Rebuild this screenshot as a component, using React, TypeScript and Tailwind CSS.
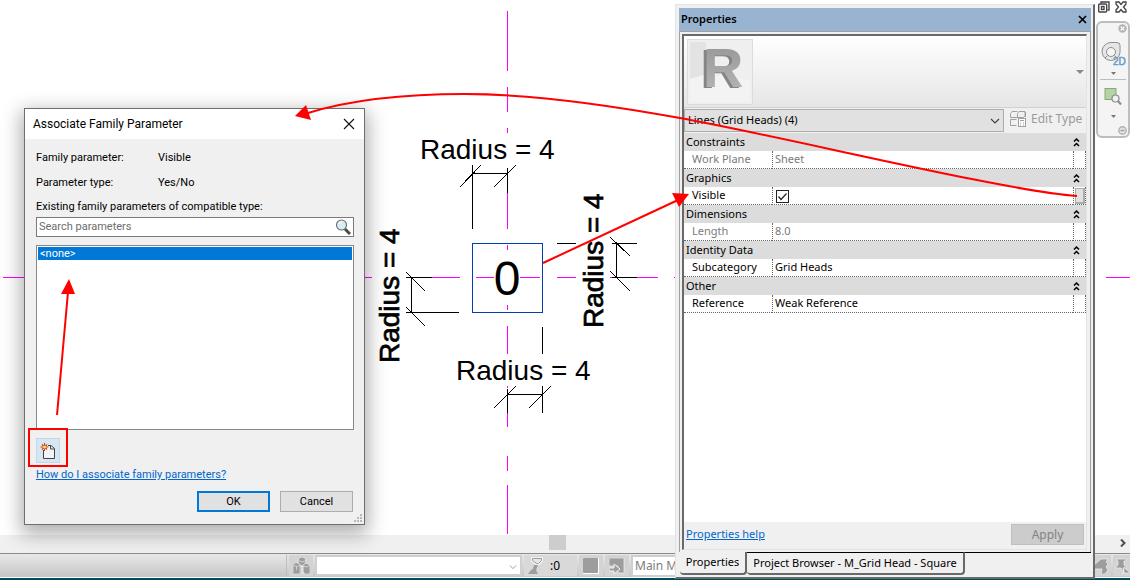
import { useState } from 'react'

type Property = {
  group: string
  name: string
  value: string
  readOnly?: boolean
  toggle?: boolean
}

const properties: Property[] = [
  { group: 'Constraints', name: 'Work Plane', value: 'Sheet', readOnly: true },
  { group: 'Graphics', name: 'Visible', value: '', toggle: true },
  { group: 'Dimensions', name: 'Length', value: '8.0', readOnly: true },
  { group: 'Identity Data', name: 'Subcategory', value: 'Grid Heads' },
  { group: 'Other', name: 'Reference', value: 'Weak Reference' },
]

function ChevronDown({ className }: { className?: string }) {
  return (
    <svg viewBox="0 0 10 6" className={className} fill="none" stroke="currentColor" strokeWidth="1.2">
      <path d="M1 1l4 4 4-4" />
    </svg>
  )
}

function DoubleUp() {
  return (
    <svg width="7" height="9" viewBox="0 0 7 9" fill="none" stroke="#000" strokeWidth="1.5">
      <path d="M1 3.500L3.500 1 6 3.500M1 8L3.500 5.500 6 8" />
    </svg>
  )
}

function Drawing() {
  return (
    <svg className="absolute inset-0 w-full h-full" fontFamily="'Liberation Sans', Arial, sans-serif">
      {/* Reference planes */}
      <g stroke="#ff00ff" shapeRendering="crispEdges">
        <path d="M507.5 11v60M507.5 87v25M507.5 128v5M507.5 193v36M507.5 245v5M507.5 305v5M507.5 326v28M507.5 386v2M507.5 413v14M507.5 456v15M507.5 485v49" />
        <path d="M3 277.5h27M360 277.5h12M432 277.5h28M476 277.5h18M520 277.5h20M557 277.5h19M610 277.5h48M674 277.5h1M1106 277.5h24" />
      </g>

      {/* Dimension lines */}
      <g stroke="#000" fill="none" shapeRendering="crispEdges">
        <path d="M472.5 165v64M472 173.5h36M507.5 168v25" />
        <path d="M406 277.5h26M406 312.5h53M411.5 277v36" />
        <path d="M557 243.5h19M612 243.5h25M612 277.5h25M616.5 243v35" />
        <path d="M542.5 327v27M507.5 389v24M542.5 386v27M507 394.5h36" />
        <path d="M460 187l21-22M494 187l22-22M494 408l22-22M529 408l22-22" />
        <path d="M406 272l19 19M406 307l19 19M610 237l20 19M610 271l20 20" />
      </g>

      <rect x="472.5" y="243.5" width="70" height="69" fill="none" stroke="#0040b0" shapeRendering="crispEdges" />

      <g fontSize="28">
        <text x="420" y="159">Radius = 4</text>
        <text x="456" y="380">Radius = 4</text>
        <g stroke="#000" strokeWidth="0.7">
          <text transform="translate(399 363) rotate(-90)">Radius = 4</text>
          <text transform="translate(603 328) rotate(-90)">Radius = 4</text>
        </g>
      </g>
      <text x="507" y="295" fontSize="48" textAnchor="middle">0</text>
    </svg>
  )
}

function Annotations() {
  return (
    <svg className="absolute inset-0 w-full h-full pointer-events-none" fill="none" stroke="#ff0000" strokeWidth="2">
      <path d="M1077 196C1000 190 790 138 680 118C620 107 540 94 465 94C400 94 350 100 308 113" />
      <path d="M543 263L678 200" />
      <path d="M57 415L68 292" />
      <rect x="29" y="429" width="38" height="37" />
      <g fill="#ff0000" stroke="none">
        <path d="M295 116l11-11 5 15z" />
        <path d="M689 194l-17-1 7 14z" />
        <path d="M69 279l-8 15h14z" />
      </g>
    </svg>
  )
}

function NavigationBar() {
  return (
    <aside className="absolute top-0 right-0 w-[34px]">
      <div className="flex justify-between pl-[2px] pr-[3px] pt-[1px]">
        <button aria-label="Restore">
          <svg width="12" height="12" viewBox="0 0 12 12" fill="none" stroke="#444" strokeWidth="1.4">
            <path d="M3 2.5V1h8v8H9.500" />
            <rect x="0.700" y="3" width="8" height="8" rx="1" />
            <rect x="3.500" y="5.500" width="2.500" height="3" />
          </svg>
        </button>
        <button aria-label="Close view">
          <svg width="12" height="12" viewBox="0 0 12 12" fill="#fff" stroke="#444" strokeWidth="1.3">
            <path d="M1 1h3l2 2.500L8 1h3v2L8.500 6 11 9v2H8L6 8.500 4 11H1V9l2.500-3L1 3z" />
          </svg>
        </button>
      </div>
      <div className="mt-2 h-[117px] rounded-md border-2 border-[#bdbdbd] bg-[#f4f4f4] flex flex-col items-center">
        <button className="self-end mr-[1px] mt-[1px]" aria-label="Close navigation bar">
          <svg width="9" height="9" viewBox="0 0 9 9">
            <circle cx="4.500" cy="4.500" r="4.200" fill="#b4b4b4" />
            <path d="M2.700 2.700l3.600 3.600M6.300 2.700L2.700 6.300" stroke="#fff" strokeWidth="1.200" />
          </svg>
        </button>
        <button className="mt-2" aria-label="Steering wheel 2D">
          <svg width="26" height="26" viewBox="0 0 26 26" fill="none" stroke="#8e8e8e">
            <path d="M11 1.500h6q3 0 3 3v7a9 9 0 1 1-9-10z" fill="#e6e6e8" />
            <circle cx="11" cy="11" r="4.500" fill="#f4f4f4" />
            <path d="M7.500 14.500l-2.500 2.500M14.500 14.500l2 2" />
            <text x="13" y="24" fontSize="10" fontFamily="'Liberation Sans', Arial, sans-serif" fill="#6c9bc8" stroke="#6c9bc8" strokeWidth="0.500">2D</text>
          </svg>
        </button>
        <svg className="mt-[5px]" width="5" height="3" viewBox="0 0 5 3"><path d="M0 0h5L2.500 3z" fill="#777" /></svg>
        <div className="mt-[4px] w-[26px] border-t border-[#bdbdbd]" />
        <button className="mt-2" aria-label="Zoom region">
          <svg width="18" height="18" viewBox="0 0 18 18">
            <rect x="1" y="0.500" width="11" height="11" fill="#b5d3a4" stroke="#83ad76" />
            <circle cx="11.500" cy="10.500" r="3.500" fill="#eef2f4" stroke="#8a8a8a" strokeWidth="1.200" />
            <path d="M14 13l3 3.500" stroke="#8a8a8a" strokeWidth="2" />
          </svg>
        </button>
        <svg className="mt-[9px]" width="5" height="3" viewBox="0 0 5 3"><path d="M0 0h5L2.500 3z" fill="#777" /></svg>
        <button className="self-end mr-[1px] mt-auto mb-[1px]" aria-label="Options">
          <svg width="9" height="9" viewBox="0 0 9 9">
            <circle cx="4.500" cy="4.500" r="3.700" fill="#e4e4e4" stroke="#b0b0b0" strokeWidth="1.400" />
            <path d="M2.500 4.500h4" stroke="#a0a0a0" strokeWidth="1.500" />
          </svg>
        </button>
      </div>
    </aside>
  )
}

function StatusBar() {
  return (
    <footer className="h-[24px] shrink-0 flex items-stretch gap-[2px] pl-[286px] py-[1px] border-t border-[#8a8a8a] bg-linear-to-b from-[#e8e8e8] to-[#c6c6c6] overflow-hidden">
      <div className="w-[1px] bg-[#bdbdbd]" />
      <button className="w-[24px] shrink-0 bg-[#d3d3d3] flex items-center justify-center" aria-label="Worksets">
        <svg width="17" height="17" viewBox="0 0 17 17" fill="#9d9d9d" stroke="#f2f2f2" strokeWidth="0.600">
          <path d="M5 4l1-3 3-1 3 1 1 3-2 5H6z" />
          <path d="M0 7l3-1.500L7 7l1 2v8H0z" />
          <path d="M10 8l3-2 4 2v9h-5l-2-2z" />
          <path d="M7 9h3v8H7zM0 8l3.500 1.500L8 8M3.500 9.500V13M5 3.500L9 5l4-1.500M10 9l3 1 4-1.500" fill="none" />
        </svg>
      </button>
      <div className="relative w-[207px] shrink-0 border-2 border-[#cfcfcf] bg-white">
        <select className="block w-full h-full appearance-none" aria-label="Active workset">
          <option></option>
        </select>
        <ChevronDown className="absolute right-[3px] top-[7px] w-[8px] h-[6px] text-[#999]" />
      </div>
      <div className="w-[53px] shrink-0 bg-[#d9d9d9] flex items-center gap-[5px] pl-[4px]">
        <svg width="17" height="17" viewBox="0 0 17 17" fill="#9d9d9d">
          <path d="M4 1h10v3l-3 3H8L4 4z" fill="#dedede" stroke="#f2f2f2" strokeWidth="2" />
          <path d="M4.500 1.500h9v2l-3 3h-2l-4-3z" fill="#e6e6e6" stroke="#9d9d9d" />
          <path d="M6 8h4l-2 5 2 4H0l3-4 2-1z" />
        </svg>
        <span className="text-[12px]">:0</span>
      </div>
      <button className="w-[24px] shrink-0 bg-[#d3d3d3] flex items-center justify-center" aria-label="Editable only">
        <svg width="16" height="16" viewBox="0 0 16 16">
          <rect width="16" height="16" rx="1" fill="#fff" />
          <rect width="15" height="15" rx="1" fill="#9d9d9d" />
        </svg>
      </button>
      <button className="w-[24px] shrink-0 bg-[#d3d3d3] flex items-center justify-center" aria-label="Design options">
        <svg width="16" height="16" viewBox="0 0 16 16">
          <path d="M0 0h15v15h-6V8H0z" fill="#9d9d9d" stroke="#f2f2f2" strokeWidth="0.700" />
          <path d="M0 10h5V6l6 5-6 5v-3H0z" fill="#9d9d9d" stroke="#f2f2f2" />
        </svg>
      </button>
      <div className="w-[200px] h-[22px] shrink-0 border-2 border-[#cfcfcf] bg-white">
        <select className="block w-full h-[17px] appearance-none px-[2px] text-[12px] leading-[17px] text-[#7d7d7d]" aria-label="Design option">
          <option>Main Model</option>
        </select>
      </div>
      <button className="ml-auto w-[20px] shrink-0 bg-[#d3d3d3] flex items-center justify-center" aria-label="Select links">
        <svg width="16" height="16" viewBox="0 0 16 16" fill="#9d9d9d" stroke="#f2f2f2" strokeWidth="0.700">
          <path d="M1 7l7-6h7l-2 3 2 2-2 3 2 3-3 4H8l1-5H1z" />
        </svg>
      </button>
      <button className="w-[17px] shrink-0 bg-[#d3d3d3] flex items-center justify-center" aria-label="Select pinned">
        <svg width="16" height="16" viewBox="0 0 16 16" fill="#9d9d9d" stroke="#f2f2f2" strokeWidth="0.700">
          <path d="M3 1h9v2h-2v4l3 3H9v6l-2-6H1l3-3V3H3z" />
          <path d="M10 9l6 6h-6z" />
        </svg>
      </button>
    </footer>
  )
}

function AssociateDialog() {
  return (
    <section
      role="dialog"
      aria-label="Associate Family Parameter"
      className="absolute left-[24px] top-[108px] w-[341px] border border-[#6e6e6e] bg-[#f0f0f0] shadow-[0_6px_18px_3px_rgba(0,0,0,0.32)] font-[Roboto,'Noto_Sans',sans-serif] text-[11px] leading-[16px]"
    >
      <header className="h-[30px] bg-white pl-2 pr-[9px] flex items-center justify-between">
        <h2 className="text-[12px]">Associate Family Parameter</h2>
        <button aria-label="Close">
          <svg width="12" height="12" viewBox="0 0 12 12" stroke="#111" strokeWidth="1.100">
            <path d="M1 1l10 10M11 1L1 11" />
          </svg>
        </button>
      </header>

      <div className="pl-[11px] pr-[10px] pt-[11px]">
        <dl className="grid grid-cols-[122px_1fr] gap-y-[9px]">
          <dt>Family parameter:</dt>
          <dd>Visible</dd>
          <dt>Parameter type:</dt>
          <dd>Yes/No</dd>
        </dl>
        <label htmlFor="search" className="block mt-2">Existing family parameters of compatible type:</label>
        <div className="mt-[2px] h-[20px] border border-[#7a7a7a] bg-white flex items-center">
          <input
            id="search"
            placeholder="Search parameters"
            className="flex-1 px-[2px] outline-none placeholder:text-[#6d6d6d]"
          />
          <svg className="mr-[2px]" width="16" height="16" viewBox="0 0 16 16">
            <path d="M10 10l5 5" stroke="#4a4a4a" strokeWidth="3" />
            <circle cx="6.500" cy="6" r="5" fill="#d9edf5" stroke="#6b6b6b" strokeWidth="1.100" />
            <path d="M4 5q1-2 3-2" stroke="#fff" fill="none" />
          </svg>
        </div>
        <ul className="mt-2 h-[185px] border border-[#828790] bg-white p-[1px]">
          <li className="h-[13px] leading-[14px] bg-[#0078d7] text-white pl-[2px]">&lt;none&gt;</li>
        </ul>
        <button className="mt-2 w-[24px] h-[25px] border border-[#bcd9ee] bg-[#d8e6f1] flex items-center justify-center" aria-label="New parameter">
          <svg width="16" height="18" viewBox="0 0 16 18">
            <path d="M3.500 8v8.500h11V6.500L11 3.500H8" fill="#f4f4f6" />
            <path d="M3.500 8v8.500h11V6.500L11 3.500H8M10.500 3.500v3.500h4" fill="none" stroke="#444" />
            <path d="M4.500 1v8M0.500 5h8M2 2.500l5 5M7 2.500l-5 5" stroke="#c8401c" strokeWidth="1.100" />
            <circle cx="4.500" cy="5" r="1.500" fill="#ffe04a" />
          </svg>
        </button>
        <a href="#help" className="block w-fit mt-[4px] text-[#0066cc] underline">How do I associate family parameters?</a>
        <div className="mt-2 flex justify-end gap-[10px] pr-[1px]">
          <button className="w-[73px] h-[21px] border-2 border-[#0078d7] bg-[#e1e1e1]">OK</button>
          <button className="w-[73px] h-[21px] border border-[#adadad] bg-[#e1e1e1]">Cancel</button>
        </div>
      </div>
      <div className="h-[12px] flex justify-end items-end pr-[2px] pb-[2px]">
        <svg width="8" height="8" viewBox="0 0 8 8" fill="#b8b8b8">
          <path d="M6 0h2v2H6zM3 3h2v2H3zM6 3h2v2H6zM0 6h2v2H0zM3 6h2v2H3zM6 6h2v2H6z" />
        </svg>
      </div>
    </section>
  )
}

function TypePreview() {
  return (
    <div className="h-[72px] shrink-0 border-b border-[#d0d0d0] bg-linear-to-b from-white to-[#e6e6e6] flex items-center justify-between pl-[3px] pr-[2px]">
      <svg className="overflow-visible" width="66" height="66" viewBox="0 0 66 66" role="img" aria-label="Family type preview">
        <defs>
          <linearGradient id="face" x1="0" y1="0" x2="0" y2="1">
            <stop offset="0" stopColor="#949494" />
            <stop offset="1" stopColor="#b8b8b8" />
          </linearGradient>
        </defs>
        <rect x="0.500" y="0.500" width="65" height="65" fill="#efefef" stroke="#dcdcdc" />
        <path d="M3 3h16v32L3 40z" fill="#e3e3e3" />
        <path d="M3 40l20-5 40 6v22H3z" fill="#f3f3f3" />
        <text
          x="16"
          y="48"
          fontFamily="'Liberation Sans', Arial, sans-serif"
          fontWeight="700"
          fontSize="56"
          fill="url(#face)"
          className="drop-shadow-[-3px_1px_0_#858585]"
        >
          R
        </text>
      </svg>
      <svg width="8" height="4" viewBox="0 0 8 4"><path d="M0 0h8L4 4z" fill="#8c8c8c" /></svg>
    </div>
  )
}

function PropertiesPalette() {
  const [visible, setVisible] = useState(true)

  return (
    <section className="absolute right-[35px] top-[4px] bottom-[1px] w-[420px] flex flex-col bg-[#f0f0f0] border-l border-t border-l-[#e3e3e3] border-t-[#e3e3e3] border-r-2 border-b-2 border-r-[#696969] border-b-[#696969] pl-[3px] pr-[2px] pt-[3px] text-[12px]">
      <header className="h-[23px] shrink-0 bg-[#99b4d1] pl-[2px] pr-[4px] flex items-center justify-between">
        <h2 className="text-[11px] font-semibold">Properties</h2>
        <button aria-label="Close palette">
          <svg width="9" height="9" viewBox="0 0 9 9" stroke="#000" strokeWidth="1.700">
            <path d="M1 1l7 7M8 1L1 8" />
          </svg>
        </button>
      </header>

      <div className="flex-1 min-h-0 border-t border-l border-r border-[#a0a0a0] p-[2px] pr-[3px]">
        <div className="h-full flex flex-col border-t-2 border-l-2 border-[#696969] border-r border-r-[#e3e3e3] border-b border-b-[#e3e3e3] text-[11px]">
          <TypePreview />

          <div className="h-[25px] shrink-0 flex items-start pt-[1px] gap-[6px]">
            <div className="relative w-[320px] h-[23px]">
              <select className="block w-full h-full appearance-none border border-[#adadad] bg-[#e1e1e1] pl-[3px]" aria-label="Selection filter">
                <option>Lines (Grid Heads) (4)</option>
              </select>
              <ChevronDown className="absolute right-[4px] top-[9px] w-[10px] h-[6px] text-[#444]" />
            </div>
            <button className="h-[20px] flex items-center gap-[5px] text-[12px] text-[#9a9a9a]">
              <svg width="16" height="16" viewBox="0 0 16 16" fill="none" stroke="#a0a0a0">
                <path d="M7.500 6.500v-4l1.500-2h6v4l-1.500 2zM0.500 6.500v-4l1.500-2h5.500M0.500 6.500h7M0.500 8.500v6h6M0.500 8.500h6M15.500 1v5" />
                <rect x="8.500" y="7.500" width="7" height="8" fill="#fff" />
                <path d="M10 9.500h4M10 12h1M13 12h1M10 14h1M13 14h1" />
              </svg>
              Edit Type
            </button>
          </div>

          <div className="flex-1 bg-white">
            <table className="w-full table-fixed border-separate border-spacing-0">
              <colgroup>
                <col className="w-[88px]" />
                <col />
                <col className="w-[13px]" />
              </colgroup>
              {properties.map((p) => (
                <tbody key={p.group}>
                  <tr className="h-[18px] bg-[#dcdcdc]">
                    <th colSpan={2} className="p-0 pl-[2px] text-left font-normal leading-[18px]">{p.group}</th>
                    <td className="p-0">
                      <button className="block" aria-label={`Collapse ${p.group}`}><DoubleUp /></button>
                    </td>
                  </tr>
                  <tr className={p.readOnly ? 'h-[18px] text-[#7a7a7a]' : 'h-[18px]'}>
                    <th className="p-0 pl-2 text-left align-top font-normal leading-[16px] border-b border-dotted border-[#666]">{p.name}</th>
                    <td className="p-0 pl-[2px] align-top leading-[16px] border-b border-l border-dotted border-[#666]">
                      {p.toggle ? (
                        <label className="relative block w-[13px] h-[13px] mt-[3px] ml-[1px]">
                          <input
                            type="checkbox"
                            aria-label={p.name}
                            checked={visible}
                            onChange={() => setVisible(!visible)}
                            className="block appearance-none w-[13px] h-[13px] border border-[#222] bg-white"
                          />
                          {visible && (
                            <svg className="absolute inset-0" width="13" height="13" viewBox="0 0 13 13" fill="none" stroke="#222" strokeWidth="1.200">
                              <path d="M2.500 6.500L5 9.500l5.500-6" />
                            </svg>
                          )}
                        </label>
                      ) : (
                        p.value
                      )}
                    </td>
                    <td className="p-0 border-b border-l border-r border-dotted border-[#666]">
                      {p.toggle && (
                        <button className="block w-[10px] h-[16px] ml-[1px] border border-[#adadad] border-r-2 border-b-2 bg-[#e1e1e1]" aria-label="Associate parameter" />
                      )}
                    </td>
                  </tr>
                </tbody>
              ))}
            </table>
          </div>

          <div className="h-[27px] shrink-0 pl-[2px] pr-[2px] pb-[2px] flex items-center justify-between text-[12px]">
            <a href="#properties" className="text-[#0066cc] underline text-[11px]">Properties help</a>
            <button className="w-[73px] h-[21px] border border-[#bfbfbf] bg-[#cccccc] text-[#838383]" disabled>Apply</button>
          </div>
        </div>
      </div>

      <nav className="h-[25px] shrink-0 flex items-start text-[11px]">
        <button className="h-[23px] w-[67px] ml-[1px] border-r-2 border-b-2 border-[#696969] rounded-b-sm">Properties</button>
        <button className="h-[23px] w-[218px] border-t border-t-black border-r-2 border-b-2 border-[#696969] rounded-b-sm">Project Browser - M_Grid Head - Square</button>
        <div className="flex-1 border-t border-black" />
      </nav>
    </section>
  )
}

export default function App() {
  return (
    <div className="relative h-screen flex flex-col overflow-hidden bg-[#004b5c] text-black font-['Noto_Sans','Open_Sans',sans-serif]">
      <main className="relative flex-1 bg-white">
        <Drawing />
        <NavigationBar />
      </main>
      <div className="h-[18px] shrink-0 bg-[#f0f0f0] flex items-start justify-end">
        <div className="flex-1 pl-[549px]">
          <div className="w-[17px] h-[15px] bg-[#cdcdcd]" />
        </div>
        <button className="px-[4px] py-[4px]" aria-label="Scroll right">
          <svg width="6" height="8" viewBox="0 0 6 8" fill="none" stroke="#505050" strokeWidth="2">
            <path d="M1 0.500L4.500 4 1 7.500" />
          </svg>
        </button>
      </div>
      <StatusBar />
      <div className="h-[3px] shrink-0 border-t border-white" />

      <PropertiesPalette />
      <AssociateDialog />
      <Annotations />
    </div>
  )
}
